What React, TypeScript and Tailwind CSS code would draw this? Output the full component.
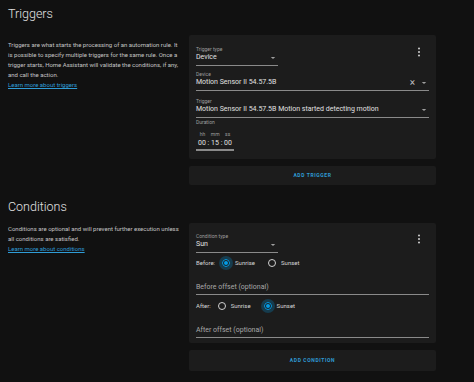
import React from 'react';

function Kebab() {
  return (
    <svg width="4" height="10" viewBox="0 0 4 10" className="text-[#d0d0d0]">
      <circle cx="2" cy="1.5" r="1" fill="currentColor" />
      <circle cx="2" cy="5" r="1" fill="currentColor" />
      <circle cx="2" cy="8.5" r="1" fill="currentColor" />
    </svg>
  );
}

function Caret() {
  return (
    <svg width="6" height="4" viewBox="0 0 6 4">
      <path d="M0.8 1 L3 3 L5.2 1 Z" fill="#9e9e9e" />
    </svg>
  );
}

function Select({ label, value, width, clear }: { label: string; value: string; width: string; clear?: boolean }) {
  return (
    <div className={`${width} border-b border-[#8a8a8a] pb-[3px]`}>
      <div className="text-[5px] leading-[7px] text-[#9e9e9e]">{label}</div>
      <div className="flex items-center">
        <span className="flex-1 text-[7px] leading-[9px] text-[#e1e1e1]">{value}</span>
        {clear && <span className="mr-[6px] text-[10px] leading-[9px] text-[#bdbdbd]">×</span>}
        <span className="mr-[2px]"><Caret /></span>
      </div>
    </div>
  );
}

function Radio({ checked, label }: { checked: boolean; label: string }) {
  return (
    <div className="flex items-center gap-[5px]">
      <span
        className={`flex h-[8px] w-[8px] items-center justify-center rounded-full border ${
          checked ? 'border-[#039be5] shadow-[0_0_0_3px_rgba(3,155,229,0.25)]' : 'border-[#d0d0d0]'
        }`}
      >
        {checked && <span className="h-[4px] w-[4px] rounded-full bg-[#039be5]" />}
      </span>
      <span className="text-[6px] text-[#d6d6d6]">{label}</span>
    </div>
  );
}

function Section({ title, children }: { title: string; children: React.ReactNode }) {
  return (
    <div>
      <h1 className="pl-[8px] text-[12.5px] leading-[16px] font-light text-[#e1e1e1]">{title}</h1>
      {children}
    </div>
  );
}

export default function App() {
  return (
    <div className="h-[382px] w-[474px] overflow-hidden bg-[#111111] pt-[6px] font-['Roboto',sans-serif]">
      <Section title="Triggers">
        <div className="flex">
          <div className="w-[189px] pl-[8px] pr-[10px] pt-[18px] text-[6px] leading-[10px] text-[#c4c4c4]">
            <p>
              Triggers are what starts the processing of an automation rule. It is possible to specify multiple
              triggers for the same rule. Once a trigger starts, Home Assistant will validate the conditions, if any,
              and call the action.
            </p>
            <a className="text-[#2f9cd6] underline">Learn more about triggers</a>
          </div>
          <div className="w-[247px] pt-[13px]">
            <div className="h-[124px] rounded-[2px] bg-[#1c1c1c] px-[7px] pt-[11px]">
              <div className="flex items-start justify-between">
                <Select label="Trigger type" value="Device" width="w-[82px]" />
                <span className="mr-[8px] mt-[1px]"><Kebab /></span>
              </div>
              <div className="mt-[5px]">
                <Select label="Device" value="Motion Sensor II 54.57.5B" width="w-full" clear />
              </div>
              <div className="mt-[7px]">
                <Select label="Trigger" value="Motion Sensor II 54.57.5B Motion started detecting motion" width="w-full" />
              </div>
              <div className="mt-[1px] text-[5px] leading-[7px] text-[#9e9e9e]">Duration</div>
              <div className="mt-[5px] w-[38px] border-b-2 border-[#8a8a8a] pb-[1px]">
                <div className="flex justify-around px-[1px] text-[5px] leading-[7px] text-[#9e9e9e]">
                  <span>hh</span>
                  <span>mm</span>
                  <span>ss</span>
                </div>
                <div className="whitespace-nowrap text-center text-[7px] leading-[10px] text-[#e1e1e1]">00 : 15 : 00</div>
              </div>
            </div>
            <div className="mt-[7px] flex h-[19px] items-center justify-center rounded-[2px] bg-[#1c1c1c] text-[5px] font-bold tracking-[0.6px] text-[#2f9cd6]">
              ADD TRIGGER
            </div>
          </div>
        </div>
      </Section>

      <div className="mt-[14px]">
        <Section title="Conditions">
          <div className="flex">
            <div className="w-[189px] pl-[8px] pr-[8px] pt-[9px] text-[6px] leading-[10px] text-[#c4c4c4]">
              <p>Conditions are optional and will prevent further execution unless all conditions are satisfied.</p>
              <a className="text-[#2f9cd6] underline">Learn more about conditions</a>
            </div>
            <div className="w-[247px] pt-[8px]">
              <div className="h-[120px] rounded-[2px] bg-[#1c1c1c] px-[7px] pt-[10px]">
                <div className="flex items-start justify-between">
                  <Select label="Condition type" value="Sun" width="w-[82px]" />
                  <span className="mr-[8px] mt-[1px]"><Kebab /></span>
                </div>
                <div className="mt-[5px] flex items-center gap-[7px]">
                  <span className="text-[6px] text-[#d6d6d6]">Before:</span>
                  <Radio checked label="Sunrise" />
                  <span className="ml-[6px]"><Radio checked={false} label="Sunset" /></span>
                </div>
                <div className="mt-[16px] w-full border-b border-[#8a8a8a] pb-[2px] text-[7px] leading-[9px] text-[#a8a8a8]">
                  Before offset (optional)
                </div>
                <div className="mt-[6px] flex items-center gap-[7px]">
                  <span className="text-[6px] text-[#d6d6d6]">After:</span>
                  <Radio checked={false} label="Sunrise" />
                  <span className="ml-[6px]"><Radio checked label="Sunset" /></span>
                </div>
                <div className="mt-[16px] w-full border-b border-[#8a8a8a] pb-[2px] text-[7px] leading-[9px] text-[#a8a8a8]">
                  After offset (optional)
                </div>
              </div>
              <div className="mt-[7px] flex h-[21px] items-center justify-center rounded-[2px] bg-[#1c1c1c] text-[5px] font-bold tracking-[0.6px] text-[#2f9cd6]">
                ADD CONDITION
              </div>
            </div>
          </div>
        </Section>
      </div>
    </div>
  );
}
